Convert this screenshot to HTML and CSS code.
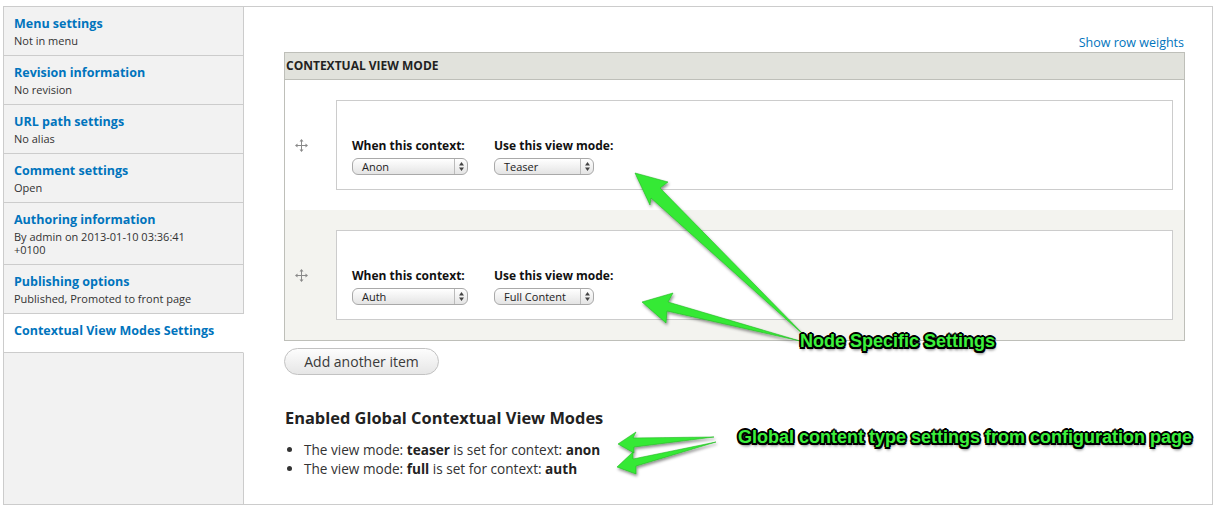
FILE: index.html
```html
<!DOCTYPE html>
<html>
<head>
<meta charset="utf-8">
<link rel="stylesheet" href="styles.css">
</head>
<body>
<div class="frame">
  <div class="sidebar">
    <div class="tab"><div class="tab-title">Menu settings</div><div class="tab-desc">Not in menu</div></div>
    <div class="tab"><div class="tab-title">Revision information</div><div class="tab-desc">No revision</div></div>
    <div class="tab"><div class="tab-title">URL path settings</div><div class="tab-desc">No alias</div></div>
    <div class="tab"><div class="tab-title">Comment settings</div><div class="tab-desc">Open</div></div>
    <div class="tab"><div class="tab-title">Authoring information</div><div class="tab-desc">By admin on 2013-01-10 03:36:41<br>+0100</div></div>
    <div class="tab"><div class="tab-title">Publishing options</div><div class="tab-desc">Published, Promoted to front page</div></div>
    <div class="tab selected"><div class="tab-title">Contextual View Modes Settings</div></div>
    <div class="tab-filler"></div>
  </div>
  <div class="main">
    <div class="weights"><a>Show row weights</a></div>
    <div class="table">
      <div class="thead">CONTEXTUAL VIEW MODE</div>
      <div class="row">
        <div class="handle-cell">
          <svg width="13" height="13" viewBox="0 0 13 13"><path d="M6.5 1.5V11.5M1.5 6.5H11.5" stroke="#8a8a8a" stroke-width="1" fill="none"/><path d="M6.5 0L4.5 2.5H8.5Z M6.5 13L4.5 10.5H8.5Z M0 6.5L2.5 4.5V8.5Z M13 6.5L10.5 4.5V8.5Z" fill="#8a8a8a"/></svg>
        </div>
        <div class="cell">
          <div class="fieldset">
            <div class="field">
              <div class="label">When this context:</div>
              <div class="select w1"><span class="val">Anon</span><span class="arr"><svg width="5" height="9" viewBox="0 0 5 9"><path d="M2.5 0L5 3.5H0Z M2.5 9L5 5.5H0Z" fill="#444"/></svg></span></div>
            </div>
            <div class="field">
              <div class="label">Use this view mode:</div>
              <div class="select w2"><span class="val">Teaser</span><span class="arr"><svg width="5" height="9" viewBox="0 0 5 9"><path d="M2.5 0L5 3.5H0Z M2.5 9L5 5.5H0Z" fill="#444"/></svg></span></div>
            </div>
          </div>
        </div>
      </div>
      <div class="row even">
        <div class="handle-cell">
          <svg width="13" height="13" viewBox="0 0 13 13"><path d="M6.5 1.5V11.5M1.5 6.5H11.5" stroke="#8a8a8a" stroke-width="1" fill="none"/><path d="M6.5 0L4.5 2.5H8.5Z M6.5 13L4.5 10.5H8.5Z M0 6.5L2.5 4.5V8.5Z M13 6.5L10.5 4.5V8.5Z" fill="#8a8a8a"/></svg>
        </div>
        <div class="cell">
          <div class="fieldset">
            <div class="field">
              <div class="label">When this context:</div>
              <div class="select w1"><span class="val">Auth</span><span class="arr"><svg width="5" height="9" viewBox="0 0 5 9"><path d="M2.5 0L5 3.5H0Z M2.5 9L5 5.5H0Z" fill="#444"/></svg></span></div>
            </div>
            <div class="field">
              <div class="label">Use this view mode:</div>
              <div class="select w2"><span class="val">Full Content</span><span class="arr"><svg width="5" height="9" viewBox="0 0 5 9"><path d="M2.5 0L5 3.5H0Z M2.5 9L5 5.5H0Z" fill="#444"/></svg></span></div>
            </div>
          </div>
        </div>
      </div>
    </div>
    <div class="btn">Add another item</div>
    <h2 class="heading">Enabled Global Contextual View Modes</h2>
    <ul class="list">
      <li>The view mode: <b>teaser</b> is set for context: <b>anon</b></li>
      <li>The view mode: <b>full</b> is set for context: <b>auth</b></li>
    </ul>
  </div>
</div>

<svg class="arrows" width="1219" height="510" viewBox="0 0 1219 510">
  <defs>
    <filter id="sh" x="-10%" y="-10%" width="130%" height="130%">
      <feDropShadow dx="1" dy="2" stdDeviation="1.5" flood-color="#000" flood-opacity="0.45"/>
    </filter>
  </defs>
  <g fill="#36e936" stroke="#22b822" stroke-width="0.6" filter="url(#sh)">
    <polygon points="635,173 668,182 660,188 806,337 651,198 650,205"/>
    <polygon points="642,302 673,293 668,302 800,341 667,311 666,323"/>
    <polygon points="618,444 636,432 633,438 714,437 634,447 634,453"/>
    <polygon points="617,467 633,452 633,459 716,442 636,466 636,474"/>
  </g>
</svg>
<div class="note note1">Node Specific Settings</div>
<div class="note note2">Global content type settings from configuration page</div>
</body>
</html>
```

FILE: styles.css
```css
html, body {
  margin: 0;
  padding: 0;
  background: #fff;
}
body {
  font-family: "Open Sans", "DejaVu Sans", sans-serif;
  color: #333;
  position: relative;
  width: 1219px;
  height: 510px;
  overflow: hidden;
}
.frame {
  margin: 6px 0 0 3px;
  width: 1210px;
  height: 499px;
  box-sizing: border-box;
  border: 1px solid #ccc;
  display: flex;
}
.sidebar {
  width: 240px;
  display: flex;
  flex-direction: column;
  background: #f2f2f2;
}
.tab {
  border-right: 1px solid #ccc;
  border-bottom: 1px solid #ccc;
  padding: 9px 8px 8px 10px;
}
.tab.selected {
  background: #fff;
  border-right: 1px solid #fff;
  padding-bottom: 13px;
}
.tab-title {
  font-size: 12.5px;
  line-height: 16px;
  font-weight: 700;
  color: #0074bd;
}
.tab-desc {
  margin-top: 2px;
  font-size: 11px;
  line-height: 13px;
  color: #333;
}
.tab-filler {
  flex: 1;
  border-right: 1px solid #ccc;
}
.main {
  flex: 1;
  padding: 27px 27px 0 40px;
}
.weights {
  text-align: right;
  font-size: 12.5px;
  line-height: 18px;
  padding-right: 1px;
}
.weights a {
  color: #0074bd;
}
.table {
  border: 1px solid #bebfb9;
}
.thead {
  background: #e1e2dc;
  border-bottom: 1px solid #bebfb9;
  height: 26px;
  line-height: 26px;
  font-size: 12px;
  font-weight: 700;
  color: #222;
  padding-left: 1px;
}
.row {
  display: flex;
  align-items: center;
  height: 130px;
  background: #fff;
}
.row.even {
  background: #f3f3ef;
}
.handle-cell {
  width: 40px;
  display: flex;
  justify-content: flex-start;
  padding-left: 10px;
  box-sizing: border-box;
}
.handle-cell svg {
  display: block;
}
.cell {
  flex: 1;
  padding: 0 11px 0 11px;
}
.fieldset {
  background: #fff;
  border: 1px solid #ccc;
  height: 90px;
  box-sizing: border-box;
  padding: 37px 15px 0;
  display: flex;
  gap: 26px;
}
.label {
  font-size: 12px;
  font-weight: 700;
  color: #111;
  line-height: 16px;
  margin-bottom: 4px;
}
.select {
  display: flex;
  align-items: center;
  height: 17px;
  box-sizing: border-box;
  border: 1px solid #a9a9a9;
  border-radius: 6px;
  background: linear-gradient(#ffffff, #e4e4e4);
  font-size: 11px;
  color: #222;
}
.select.w1 { width: 116px; }
.select.w2 { width: 100px; }
.select .val {
  flex: 1;
  padding-left: 9px;
  line-height: 15px;
}
.select .arr {
  width: 12px;
  height: 15px;
  border-left: 1px solid #bbb;
  display: flex;
  align-items: center;
  justify-content: center;
}
.select .arr svg { display: block; }
.btn {
  margin-top: 7px;
  width: 155px;
  height: 27px;
  box-sizing: border-box;
  border: 1px solid #c2c2c2;
  border-radius: 14px;
  background: linear-gradient(#fdfdfd, #e6e6e6);
  font-size: 14px;
  line-height: 25px;
  color: #3a3a3a;
  text-align: center;
}
.heading {
  margin: 33px 0 0 1px;
  font-size: 16.4px;
  line-height: 20px;
  font-weight: 700;
  color: #222;
}
.list {
  margin: 12px 0 0 0;
  padding: 0 0 0 20px;
  font-size: 13.6px;
  line-height: 19px;
  color: #333;
}
.list b { color: #222; }
.arrows {
  position: absolute;
  left: 0;
  top: 0;
  pointer-events: none;
}
.note {
  position: absolute;
  font-family: "Liberation Sans", Arial, sans-serif;
  font-weight: 700;
  color: #3cf03c;
  white-space: nowrap;
  text-shadow:
    -1.5px -1.5px 0 #000, 1.5px -1.5px 0 #000, -1.5px 1.5px 0 #000, 1.5px 1.5px 0 #000,
    0 -2px 0 #000, 0 2px 0 #000, -2px 0 0 #000, 2px 0 0 #000,
    1px 3px 3px rgba(0,0,0,0.6);
}
.note1 {
  left: 800px;
  top: 330px;
  font-size: 18px;
  line-height: 22px;
}
.note2 {
  left: 738px;
  top: 426px;
  font-size: 18px;
  line-height: 22px;
}
```
